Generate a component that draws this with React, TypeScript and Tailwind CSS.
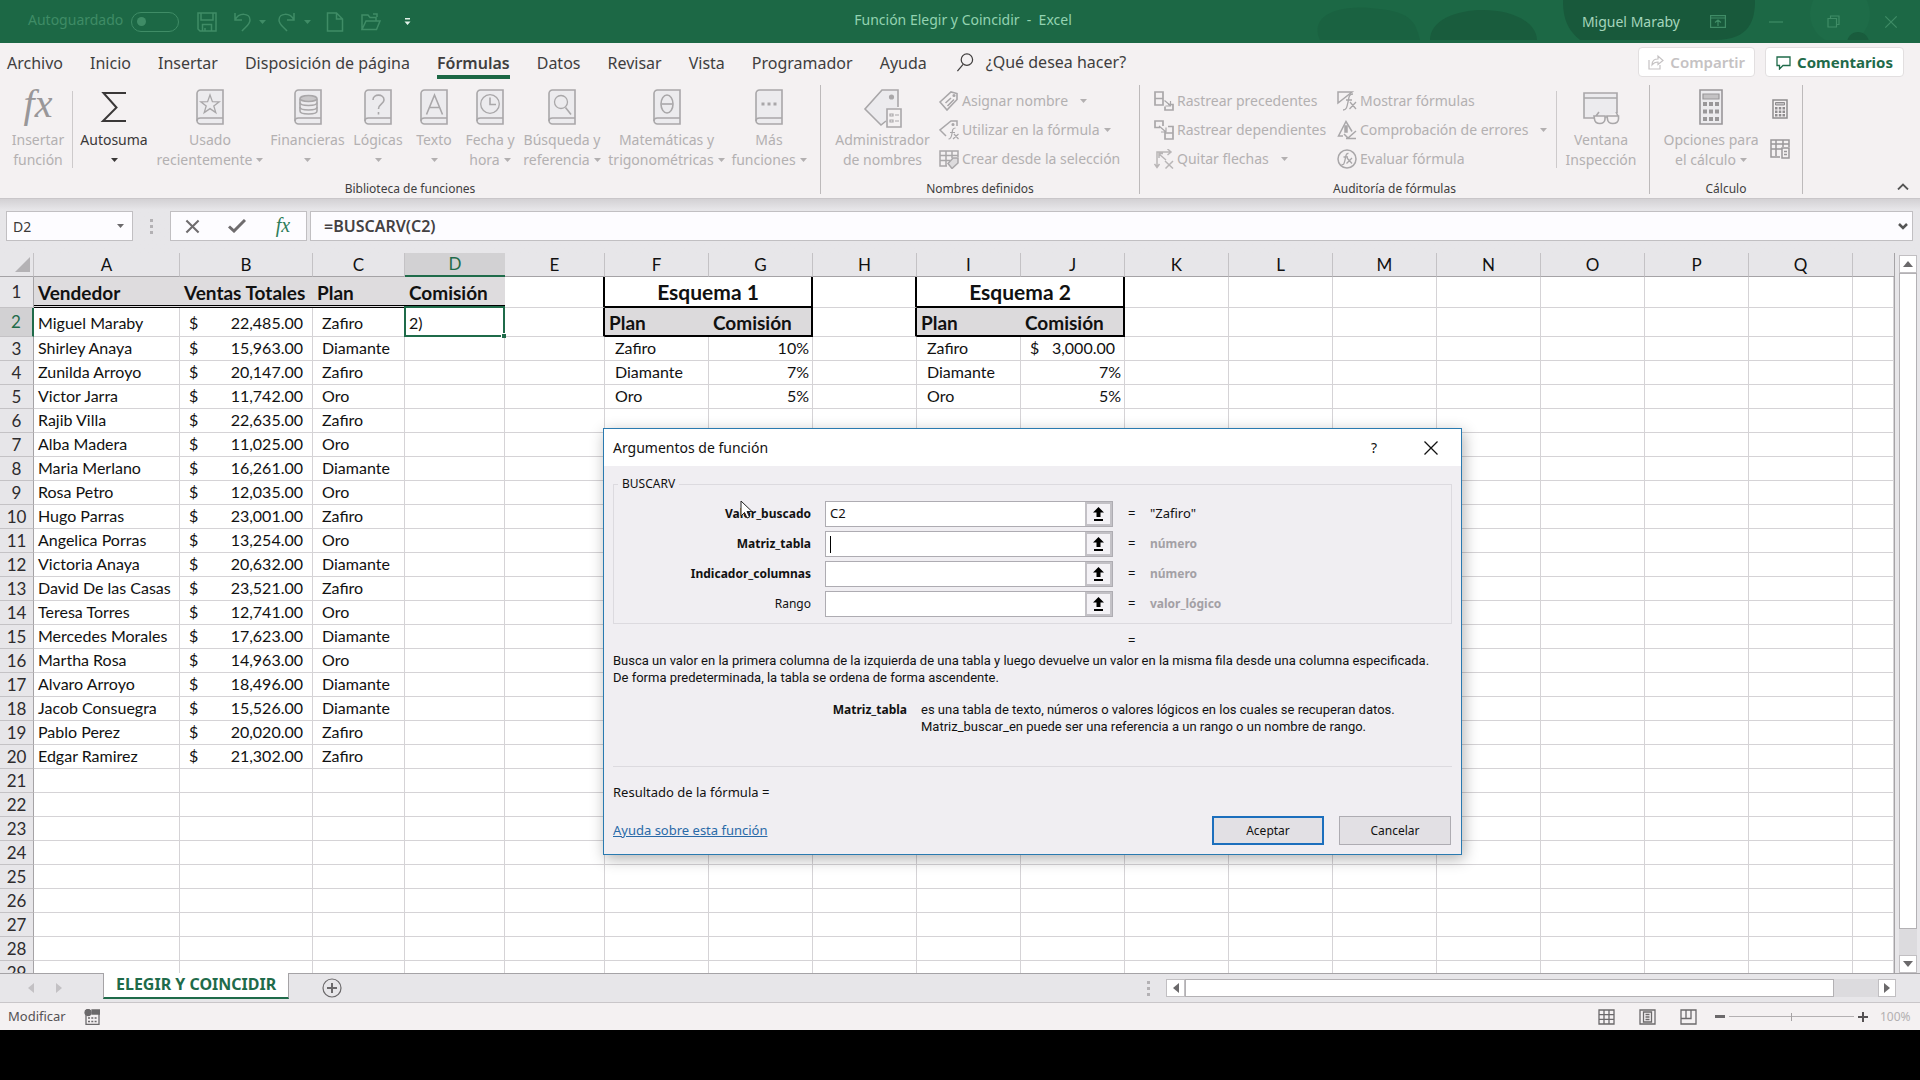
import React from 'react';

const GRAY = '#a9a7a9';

/* ---------- icons ---------- */

function Caret({ className = 'text-[#b3b0b1]' }: { className?: string }) {
  return (
    <svg viewBox="0 0 7 4" className={`h-1 w-[7px] shrink-0 ${className}`} fill="currentColor" aria-hidden="true">
      <path d="M0 0h7L3.500 4z" />
    </svg>
  );
}

function Book({ children }: { children: React.ReactNode }) {
  return (
    <svg viewBox="0 0 28 36" className="h-9 w-7" fill="none" stroke="#a9a7a9" strokeWidth="1.600" aria-hidden="true">
      <path d="M5 1h22v34H4.500a3.500 3.500 0 0 1-3.500-3.500V4.500A3.500 3.500 0 0 1 4.500 1z" fill="#ecebee" />
      <path d="M1 32c0-2 1.500-3 3.500-3H27" />
      {children}
    </svg>
  );
}

function FxGlyph({ size, color, className }: { size: number; color: string; className: string }) {
  return (
    <svg viewBox="0 0 36 36" className={`overflow-visible ${className}`} aria-hidden="true">
      <text x="18" y="28" textAnchor="middle" fontFamily='"Liberation Serif", serif' fontStyle="italic" fontSize={size} fill={color}>
        fx
      </text>
    </svg>
  );
}

const Sigma = () => (
  <svg viewBox="0 0 28 36" className="h-9 w-7" fill="none" stroke="#3a3838" strokeWidth="2" aria-hidden="true">
    <path d="M26 4H3.500l13 14.500L3 32h23" />
  </svg>
);

const StarBook = () => (
  <Book>
    <path d="M14 6l2.400 6.600 6.800.2-5.400 4.100 2 6.700-5.800-4-5.800 4 2-6.700-5.400-4.100 6.800-.2z" strokeWidth="1.300" />
  </Book>
);
const CoinBook = () => (
  <Book>
    <path d="M6 10v12c0 4 17 4 17 0V10" />
    <ellipse cx="14.500" cy="9.500" rx="8.500" ry="3" fill="#c9c7c9" />
    <path d="M6 13.500c0 4 17 4 17 0M6 18c0 4 17 4 17 0" />
  </Book>
);
const QuestionBook = () => (
  <Book>
    <path d="M9 11c0-6.500 11-6.500 11 0 0 4-5.500 4-5.500 9M14.500 23v2.500" />
  </Book>
);
const LetterBook = () => (
  <Book>
    <path d="M6.500 25.500L14.500 6l8 19.500M9.500 18.500h10" />
  </Book>
);
const ClockBook = () => (
  <Book>
    <circle cx="14" cy="15" r="9.300" strokeWidth="1.300" />
    <path d="M14 8.500V15.500h6" />
  </Book>
);
const SearchBook = () => (
  <Book>
    <circle cx="13" cy="13" r="6.500" strokeWidth="1.300" />
    <path d="M17.500 18.500l5.500 7" />
  </Book>
);
const ThetaBook = () => (
  <Book>
    <ellipse cx="14" cy="15" rx="6" ry="9" />
    <path d="M8.500 15h11" />
  </Book>
);
const DotsBook = () => (
  <Book>
    <path d="M6.500 13.500h3v3h-3zM12.500 13.500h3v3h-3zM18.500 13.500h3v3h-3z" fill={GRAY} stroke="none" />
  </Book>
);
const NameTag = () => (
  <svg viewBox="0 0 40 40" className="mb-[-4px] h-10 w-10" fill="none" stroke={GRAY} strokeWidth="1.600" aria-hidden="true">
    <path d="M23 32l-5 4L2 20 19 1h16v17" fill="#ecebee" />
    <circle cx="28.500" cy="8" r="1.800" fill={GRAY} />
    <path d="M24 20h14v18H24z" fill="#f4f1f2" />
    <path d="M27 25h3v2h-3zM27 31h3v2h-3zM32 26h4M32 32h4" strokeWidth="1.200" />
  </svg>
);
const TagSmall = () => (
  <svg viewBox="0 0 20 20" className="h-5 w-5" fill="none" stroke={GRAY} strokeWidth="1.600" aria-hidden="true">
    <path d="M1 11L12 1l6 1.500v6L8 19z" />
    <path d="M6.500 12L12 7M8.500 15L15 8.500" />
    <circle cx="15" cy="4.500" r=".8" />
  </svg>
);
const TagFx = () => (
  <svg viewBox="0 0 20 20" className="h-5 w-5" fill="none" stroke={GRAY} strokeWidth="1.500" aria-hidden="true">
    <path d="M7 16l-6-6L12 1h6v5" />
    <circle cx="14" cy="4.500" r=".8" />
    <path d="M16.500 8c-3 0-3 2-3.500 5.500S12 19 9.500 19M11 12.500h5M15 14l4.500 5M19.500 14L14 19" strokeWidth="1.200" />
  </svg>
);
const TableTag = () => (
  <svg viewBox="0 0 20 20" className="h-5 w-5" fill="none" stroke={GRAY} strokeWidth="1.500" aria-hidden="true">
    <path d="M8 17H1V2h18v6M1 6.500h18M1 11.500h10M7 2v15M13 2v7" />
    <path d="M9 14.500l5-5.500h5v5l-6 5.500z" fill="#dddbdd" />
  </svg>
);
const Precedents = () => (
  <svg viewBox="0 0 20 20" className="h-5 w-5" fill="none" stroke={GRAY} strokeWidth="1.700" aria-hidden="true">
    <path d="M1 1h8v13H1zM1 7.500h8M14 13.500h5V19h-8v-3.500" />
    <path d="M10.500 9.500l6 5M16.500 10v5h-5" strokeWidth="1.200" />
  </svg>
);
const Dependents = () => (
  <svg viewBox="0 0 20 20" className="h-5 w-5" fill="none" stroke={GRAY} strokeWidth="1.700" aria-hidden="true">
    <path d="M6 7.500H1V1h8v5M14 6.500h5V19h-8V12M11 13h8" />
    <path d="M5 6l7 6M12 7.500V12H7" strokeWidth="1.200" />
  </svg>
);
const RemoveArrows = () => (
  <svg viewBox="0 0 20 20" className="h-5 w-5" fill="none" stroke="#b9b6b7" strokeWidth="1.500" aria-hidden="true">
    <path d="M3 19V3h14M13.500 0L17 3l-3.500 3M.5 15L3 18.500 5.500 15M5 5l7 6M9 4.500H5V9M11 12l8 7.500M19 12l-7.500 7.500" />
  </svg>
);
const ShowFormulas = () => (
  <svg viewBox="0 0 20 20" className="h-5 w-5" fill="none" stroke={GRAY} strokeWidth="1.500" aria-hidden="true">
    <path d="M1 12V1h14L1 12z" />
    <path d="M16 3c-4 0-4 3-5 8S9.500 19 6 19M9 9h6M13 11l6 7M19 11l-6.500 7" strokeWidth="1.300" />
  </svg>
);
const ErrorCheck = () => (
  <svg viewBox="0 0 20 20" className="h-5 w-5" fill="none" stroke={GRAY} strokeWidth="1.500" aria-hidden="true">
    <path d="M6 16H1.500L9 1.500l6 10" />
    <path d="M8 6h2v6H8z" fill={GRAY} />
    <path d="M7 14l4 4 8-7M9 18.500h10" />
  </svg>
);
const Evaluate = () => (
  <svg viewBox="0 0 20 20" className="h-5 w-5" fill="none" stroke={GRAY} strokeWidth="1.500" aria-hidden="true">
    <circle cx="10" cy="10" r="9" />
    <path d="M11.500 4.500C8.500 4 9 7 8 11s-1 5-3.500 4.500M6.500 8h4.500M10 9l5 5.500M15 9l-5.500 5.500" strokeWidth="1.300" />
  </svg>
);
const WatchWindow = () => (
  <svg viewBox="0 0 38 36" className="h-9 w-[38px]" fill="none" stroke={GRAY} strokeWidth="1.600" aria-hidden="true">
    <path d="M12 29H2V4h33v20" fill="#ecebee" />
    <path d="M2 9h33" />
    <path d="M12 27h11v3c0 6-10 6-10.500 0zM25 27h11.500v3c-.5 6-11 6-11 0zM23 28h2.500M14 27l3-4M36 27l-2-4" fill="#f4f1f2" />
  </svg>
);
const Calculator = ({ className }: { className: string }) => (
  <svg viewBox="0 0 24 36" className={className} fill="none" stroke="#999799" strokeWidth="1.600" aria-hidden="true">
    <path d="M1 1h22v34H1z" fill="#ecebee" />
    <path d="M4 5h16v5H4z" fill="#c4c2c4" strokeWidth="1.200" />
    <path d="M4 13h4v4H4zM10 13h4v4h-4zM16 13h4v4h-4zM4 20.500h4v4H4zM10 20.500h4v4h-4zM16 20.500h4v4h-4zM4 28h4v4H4zM10 28h4v4h-4zM16 28h4v4h-4z" fill="#999799" stroke="none" />
  </svg>
);
const SmallCalculator = () => (
  <svg viewBox="0 0 16 20" className="h-5 w-4" fill="none" stroke="#8f8d8f" strokeWidth="1.500" aria-hidden="true">
    <path d="M1 1h14v18H1z" />
    <path d="M3.500 3.500h9v2.500h-9z" fill="#c4c2c4" strokeWidth="1" />
    <path d="M3 8h2.500v2.500H3zM6.800 8h2.500v2.500H6.800zM10.500 8H13v2.500h-2.500zM3 11.500h2.500V14H3zM6.800 11.500h2.500V14H6.800zM10.500 11.500H13V14h-2.500zM3 15h2.500v2.500H3zM6.800 15h2.500v2.500H6.800zM10.500 15H13v2.500h-2.500z" fill="#8f8d8f" stroke="none" />
  </svg>
);
const CalcSheet = () => (
  <svg viewBox="0 0 20 20" className="h-5 w-5" fill="none" stroke="#999799" strokeWidth="1.500" aria-hidden="true">
    <path d="M10 18H1V1h18v7M1 5h18M1 10h11M6 1v16M13 1v7" />
    <path d="M12 9h7v10h-7zM14 12.500h3M14 15.500h3" />
  </svg>
);
const Cross = ({ className, width }: { className: string; width: number }) => (
  <svg viewBox="0 0 16 16" className={className} fill="none" stroke="currentColor" strokeWidth={width} aria-hidden="true">
    <path d="M1.500 1.500l13 13M14.500 1.500l-13 13" />
  </svg>
);

/* ---------- title bar and ribbon tabs ---------- */

function TitleBar() {
  const stroke = { fill: 'none', stroke: 'currentColor', strokeWidth: 1.5 };
  return (
    <header className="relative flex h-[43px] shrink-0 items-center bg-[#1c6845] text-[14px] text-[#3f8c66]">
      <svg viewBox="0 0 640 43" className="absolute right-0 top-0 h-full w-[640px]" aria-hidden="true">
        <path d="M40 40C30 20 50 5 90 8s45 12 50 32z" fill="#1a6241" />
        <path d="M150 40c0-40 105-40 107 0z" fill="#195c3d" />
        <path d="M283 0h192c0 20-5 40-40 40H300c-15-12-17-26-17-40z" fill="#18593b" />
        <circle cx="560" cy="14" r="30" fill="#1e6c48" />
        <circle cx="578" cy="43" r="11" fill="#195c3d" />
        <path d="M0 40h640v3H0z" fill="#1c6845" />
      </svg>
      <div className="relative flex min-w-0 flex-1 items-center pl-7">
        <span className="pb-1">Autoguardado</span>
        <button role="switch" aria-checked="false" aria-label="Autoguardado" className="ml-2 flex h-5 w-12 items-center rounded-full border border-current pl-[5px]">
          <span className="h-[9px] w-[9px] rounded-full bg-current" />
        </button>
        <button aria-label="Guardar" className="ml-[18px]">
          <svg viewBox="0 0 20 20" className="h-5 w-5" {...stroke}>
            <path d="M1 1h18v18H3l-2-2zM4 1v7h12V1M5.500 19v-6.500h9V19M8 16v3" />
          </svg>
        </button>
        <button aria-label="Deshacer" className="ml-4 flex items-center gap-2">
          <svg viewBox="0 0 18 20" className="h-5 w-[18px]" {...stroke}>
            <path d="M2 1v7h7M2 8C6 0 17 1 17 8c0 5-5 7-8 11" />
          </svg>
          <Caret className="text-current" />
        </button>
        <button aria-label="Rehacer" className="ml-3 flex items-center gap-2">
          <svg viewBox="0 0 18 20" className="h-5 w-[18px]" {...stroke}>
            <path d="M16 1v7H9M16 8C12 0 1 1 1 8c0 5 5 7 8 11" />
          </svg>
          <Caret className="text-current" />
        </button>
        <button aria-label="Nuevo" className="ml-[15px]">
          <svg viewBox="0 0 18 20" className="h-5 w-[18px]" {...stroke}>
            <path d="M1.500 1h9l6 6v12h-15zM10.500 1v6h6" />
          </svg>
        </button>
        <button aria-label="Abrir" className="ml-[17px]">
          <svg viewBox="0 0 20 18" className="h-[18px] w-5" {...stroke}>
            <path d="M1 16.500V2h6l2 2.500h6V8M1 16.500L5 8h14l-3.500 8.500zM12 1h4v3" />
          </svg>
        </button>
        <button aria-label="Personalizar barra" className="ml-[23px] text-[#e3f3ea]">
          <svg viewBox="0 0 7 8" className="h-2 w-[7px]" fill="currentColor">
            <path d="M1 0h5v1.500H1zM.500 3.500h6L3.500 7z" />
          </svg>
        </button>
      </div>
      <h1 className="relative whitespace-pre pb-1 text-center font-normal text-[#93d3b1]">Función Elegir y Coincidir  -  Excel</h1>
      <div className="relative flex min-w-0 flex-1 items-center justify-end pr-[22px]">
        <span className="mr-[30px] text-[#a5d5bb]">Miguel Maraby</span>
        <button aria-label="Opciones de cinta" className="mr-[43px]">
          <svg viewBox="0 0 16 13" className="h-[13px] w-4" {...stroke} strokeWidth="1.200">
            <path d="M.6.6h14.800v11.800H.6zM.6 3h14.800M8 11V5M5 7.500L8 5l3 2.500" />
          </svg>
        </button>
        <button aria-label="Minimizar" className="mr-11">
          <svg viewBox="0 0 14 14" className="h-[14px] w-[14px]" {...stroke} strokeWidth="1.200"><path d="M0 7h14" /></svg>
        </button>
        <button aria-label="Restaurar" className="mr-11">
          <svg viewBox="0 0 13 13" className="h-[13px] w-[13px]" {...stroke} strokeWidth="1.200"><path d="M1 3.500h8.500V12H1zM3.500 3V1H12v8.500h-2" /></svg>
        </button>
        <button aria-label="Cerrar"><Cross className="h-[14px] w-[14px]" width={1.4} /></button>
      </div>
    </header>
  );
}

const TABS = ['Archivo', 'Inicio', 'Insertar', 'Disposición de página', 'Fórmulas', 'Datos', 'Revisar', 'Vista', 'Programador', 'Ayuda'];

function TabRow() {
  return (
    <nav className="flex h-[42px] shrink-0 items-start justify-between pl-[7px] pr-4 text-[16px] text-[#403e3e]">
      <div className="flex items-start gap-[27px] pt-[7px]">
        {TABS.map((t) => (
          <button
            key={t}
            className={
              t === 'Fórmulas'
                ? 'h-[29px] whitespace-nowrap border-b-4 border-[#1c6845] font-semibold leading-6'
                : 'h-[29px] whitespace-nowrap border-b-4 border-transparent leading-6'
            }
          >
            {t}
          </button>
        ))}
        <button className="flex h-6 items-center gap-3 whitespace-nowrap pl-[2px]">
          <svg viewBox="0 0 18 20" className="h-[19px] w-[18px]" fill="none" stroke="currentColor" strokeWidth="1.300" aria-hidden="true">
            <circle cx="11" cy="7" r="6" />
            <path d="M7 12l-6 7" />
          </svg>
          ¿Qué desea hacer?
        </button>
      </div>
      <div className="flex gap-[10px] pt-1">
        <button disabled className="flex h-[30px] items-center gap-1.5 rounded border border-[#e2dfe0] bg-white px-[9px] text-[15px] font-semibold text-[#c5c2c3]">
          <svg viewBox="0 0 16 16" className="h-4 w-4" fill="none" stroke="currentColor" strokeWidth="1.200" aria-hidden="true">
            <path d="M1 6v9h11v-4M4 11c0-5 3-6 6-6V2l5 4.500-5 4V8c-3 0-4.500 1-6 3z" />
          </svg>
          Compartir
        </button>
        <button className="flex h-[30px] items-center gap-1.5 rounded border border-[#e2dfe0] bg-white px-[10px] text-[15px] font-bold text-[#1f6b4a]">
          <svg viewBox="0 0 15 15" className="h-[15px] w-[15px]" fill="none" stroke="currentColor" strokeWidth="1.300" aria-hidden="true">
            <path d="M1 2h13v8.500H7L3.500 14v-3.500H1z" />
          </svg>
          Comentarios
        </button>
      </div>
    </nav>
  );
}

/* ---------- ribbon ---------- */

type BigProps = { icon: React.ReactNode; lines: string[]; width: string; caret?: boolean; active?: boolean };

function BigButton({ icon, lines, width, caret, active }: BigProps) {
  return (
    <button className={`flex shrink-0 flex-col items-center pt-1 text-[14px] leading-5 ${width} ${active ? 'text-[#3a3838]' : 'text-[#b3b0b1]'}`}>
      {icon}
      <span className="mt-[5px] whitespace-nowrap">{lines[0]}</span>
      <span className="flex h-5 items-center gap-1 whitespace-nowrap">
        {lines[1]}
        {caret && <Caret className={active ? 'text-[#3a3838]' : 'text-[#b3b0b1]'} />}
      </span>
    </button>
  );
}

function SmallButton({ icon, label, caret, gap = 'ml-1' }: { icon: React.ReactNode; label: string; caret?: boolean; gap?: string }) {
  return (
    <button className="flex h-[29px] items-center whitespace-nowrap text-[14px] text-[#b3b0b1]">
      {icon}
      <span className="ml-[3px]">{label}</span>
      {caret && <span className={gap}><Caret /></span>}
    </button>
  );
}

function Group({ label, children }: { label: string; children: React.ReactNode }) {
  return (
    <section className="flex shrink-0 flex-col border-r border-[#bdbabb]">
      <div className="flex flex-1">{children}</div>
      <h2 className="text-center text-[12px] font-normal leading-[11px] text-[#403e3e]">{label}</h2>
    </section>
  );
}

const Divider = () => <span className="mt-1.5 h-[77px] w-px shrink-0 bg-[#cdcacb]" />;

function Ribbon() {
  return (
    <div className="relative flex h-[113px] shrink-0 pb-1">
      <Group label="Biblioteca de funciones">
        <div className="flex pl-1 pr-[11px]">
          <BigButton width="w-[68px]" icon={<FxGlyph size={40} color="#999799" className="h-9 w-9" />} lines={['Insertar', 'función']} />
          <Divider />
          <BigButton width="ml-0.5 w-[78px]" icon={<Sigma />} lines={['Autosuma', '']} caret active />
          <BigButton width="w-[114px]" icon={<StarBook />} lines={['Usado', 'recientemente']} caret />
          <BigButton width="w-[81px]" icon={<CoinBook />} lines={['Financieras', '']} caret />
          <BigButton width="w-[60px]" icon={<QuestionBook />} lines={['Lógicas', '']} caret />
          <BigButton width="w-[52px]" icon={<LetterBook />} lines={['Texto', '']} caret />
          <BigButton width="w-[60px]" icon={<ClockBook />} lines={['Fecha y', 'hora']} caret />
          <BigButton width="w-[84px]" icon={<SearchBook />} lines={['Búsqueda y', 'referencia']} caret />
          <BigButton width="w-[125px]" icon={<ThetaBook />} lines={['Matemáticas y', 'trigonométricas']} caret />
          <BigButton width="w-[80px]" icon={<DotsBook />} lines={['Más', 'funciones']} caret />
        </div>
      </Group>
      <Group label="Nombres definidos">
        <div className="flex pl-[5px]">
          <BigButton width="w-[113px]" icon={<NameTag />} lines={['Administrador', 'de nombres']} />
          <div className="flex w-[200px] flex-col pt-px">
            <SmallButton icon={<TagSmall />} label="Asignar nombre" caret gap="ml-3" />
            <SmallButton icon={<TagFx />} label="Utilizar en la fórmula" caret />
            <SmallButton icon={<TableTag />} label="Crear desde la selección" />
          </div>
        </div>
      </Group>
      <Group label="Auditoría de fórmulas">
        <div className="flex pl-[14px] pr-1.5">
          <div className="flex w-[183px] flex-col pt-px">
            <SmallButton icon={<Precedents />} label="Rastrear precedentes" />
            <SmallButton icon={<Dependents />} label="Rastrear dependientes" />
            <SmallButton icon={<RemoveArrows />} label="Quitar flechas" caret gap="ml-3" />
          </div>
          <div className="flex w-[219px] flex-col pt-px">
            <SmallButton icon={<ShowFormulas />} label="Mostrar fórmulas" />
            <SmallButton icon={<ErrorCheck />} label="Comprobación de errores" caret gap="ml-3" />
            <SmallButton icon={<Evaluate />} label="Evaluar fórmula" />
          </div>
          <Divider />
          <BigButton width="ml-0.5 w-[84px]" icon={<WatchWindow />} lines={['Ventana', 'Inspección']} />
        </div>
      </Group>
      <Group label="Cálculo">
        <div className="flex pl-2 pr-1.5">
          <BigButton width="w-[106px]" icon={<Calculator className="h-9 w-6" />} lines={['Opciones para', 'el cálculo']} caret />
          <div className="flex w-8 flex-col items-center gap-5 pt-[14px]">
            <button aria-label="Calcular ahora"><SmallCalculator /></button>
            <button aria-label="Calcular hoja"><CalcSheet /></button>
          </div>
        </div>
      </Group>
      <div className="flex flex-1 items-end justify-end pb-1 pr-[11px]">
        <button aria-label="Contraer la cinta" className="text-[#555]">
          <svg viewBox="0 0 12 7" className="h-[7px] w-3" fill="none" stroke="currentColor" strokeWidth="1.800"><path d="M1 6.500l5-5 5 5" /></svg>
        </button>
      </div>
    </div>
  );
}

function FormulaBar() {
  return (
    <div className="flex h-[55px] shrink-0 items-center border-t border-[#c9c6c9] bg-linear-to-b from-[#d3d1d4] to-[#e7e6e9] to-20% pl-1.5 pr-[7px] text-[14px] text-[#3a3838]">
      <div className="flex h-[30px] w-[127px] items-center border border-[#c1bfc2] bg-[#fdfcff] pr-2">
        <input aria-label="Cuadro de nombres" defaultValue="D2" className="w-full min-w-0 bg-transparent pl-1.5 outline-none" />
        <Caret className="text-[#6b696b]" />
      </div>
      <span className="mx-[17px] flex flex-col gap-[3px]">
        <i className="h-[3px] w-[3px] bg-[#b3b1b4]" />
        <i className="h-[3px] w-[3px] bg-[#b3b1b4]" />
        <i className="h-[3px] w-[3px] bg-[#b3b1b4]" />
      </span>
      <div className="flex h-[30px] w-[137px] items-center justify-between border border-[#c1bfc2] bg-[#fdfcff] pl-[14px] pr-[13px] text-[#6f6c6e]">
        <button aria-label="Cancelar"><Cross className="h-[15px] w-[15px]" width={2.2} /></button>
        <button aria-label="Introducir">
          <svg viewBox="0 0 18 14" className="h-[14px] w-[18px]" fill="none" stroke="currentColor" strokeWidth="3"><path d="M1 7.500l5 4.500L17 1" /></svg>
        </button>
        <button aria-label="Insertar función"><FxGlyph size={36} color="#2e7d5a" className="h-5 w-5" /></button>
      </div>
      <div className="ml-[3px] flex h-[30px] flex-1 items-center border border-[#c1bfc2] bg-[#fdfcff] pl-[13px] pr-1">
        <input aria-label="Barra de fórmulas" defaultValue="=BUSCARV(C2)" className="min-w-0 flex-1 bg-transparent text-[16px] font-semibold text-[#444143] outline-none" />
        <button aria-label="Expandir barra de fórmulas" className="text-[#555]">
          <svg viewBox="0 0 10 7" className="h-[7px] w-[10px]" fill="none" stroke="currentColor" strokeWidth="2.500"><path d="M1 1l4 4 4-4" /></svg>
        </button>
      </div>
    </div>
  );
}

/* ---------- worksheet ---------- */

const COLS = 'ABCDEFGHIJKLMNOPQ'.split('');
const WIDTHS = [34, 146, 133, 92, 100, 100, 104, 104, 104, 104, 104, 104, 104, 104, 104, 104, 104, 104];
const PEOPLE: [string, string, string][] = [
  ['Miguel Maraby', '22,485.00', 'Zafiro'],
  ['Shirley Anaya', '15,963.00', 'Diamante'],
  ['Zunilda Arroyo', '20,147.00', 'Zafiro'],
  ['Victor Jarra', '11,742.00', 'Oro'],
  ['Rajib Villa', '22,635.00', 'Zafiro'],
  ['Alba Madera', '11,025.00', 'Oro'],
  ['Maria Merlano', '16,261.00', 'Diamante'],
  ['Rosa Petro', '12,035.00', 'Oro'],
  ['Hugo Parras', '23,001.00', 'Zafiro'],
  ['Angelica Porras', '13,254.00', 'Oro'],
  ['Victoria Anaya', '20,632.00', 'Diamante'],
  ['David De las Casas', '23,521.00', 'Zafiro'],
  ['Teresa Torres', '12,741.00', 'Oro'],
  ['Mercedes Morales', '17,623.00', 'Diamante'],
  ['Martha Rosa', '14,963.00', 'Oro'],
  ['Alvaro Arroyo', '18,496.00', 'Diamante'],
  ['Jacob Consuegra', '15,526.00', 'Diamante'],
  ['Pablo Perez', '20,020.00', 'Zafiro'],
  ['Edgar Ramirez', '21,302.00', 'Zafiro'],
];
const PLANS: Record<number, [string, string, string]> = {
  3: ['Zafiro', '10%', '3,000.00'],
  4: ['Diamante', '7%', '7%'],
  5: ['Oro', '5%', '5%'],
};

const CELL = 'overflow-visible whitespace-nowrap border-b border-r border-[#d5d3d6] p-0 pb-0.5 text-[16px] leading-5';
const TALL = 'whitespace-nowrap border-b border-r border-[#d5d3d6] p-0 pt-0.5 text-[16px] leading-5';
const HEAD = 'whitespace-nowrap border-b-[3px] border-double border-black bg-[#dedcde] p-0 pl-1 pt-1 text-[19px] font-bold leading-6';
const TITLE = 'border-b-2 border-r-2 border-black p-0 text-center text-[21px] font-bold leading-6';
const SUBHEAD = 'border-b-2 border-black bg-[#dcdadc] p-0 pl-1 pt-0.5 text-[19px] font-bold leading-6';
const LEFT_OF_BOX = 'border-b border-r-2 border-b-[#d5d3d6] border-r-black p-0';

function Money({ value }: { value: string }) {
  return (
    <span className="flex justify-between px-[9px]">
      <span>$</span>
      <span>{value}</span>
    </span>
  );
}

function Blank({ n }: { n: number }) {
  return <>{Array.from({ length: n }, (_, i) => <td key={i} className={CELL} />)}</>;
}

function RowHead({ n }: { n: number }) {
  return (
    <th
      className={
        n === 2
          ? 'border-b border-r-2 border-b-[#c4c2c5] border-r-[#1f6b4a] bg-[#d2d1d3] p-0 text-[17px] font-normal leading-5 text-[#1f6b4a]'
          : 'border-b border-r border-b-[#c4c2c5] border-r-[#a5a3a6] bg-[#e7e6e9] p-0 text-[17px] font-normal leading-5 text-[#2e2c2e]'
      }
    >
      {n}
    </th>
  );
}

function Sheet() {
  return (
    <table className="w-full table-fixed border-separate border-spacing-0 bg-white font-['Lato',sans-serif] text-[17px] text-[#111]">
      <colgroup>
        {WIDTHS.map((w, i) => <col key={i} style={{ width: w }} />)}
        <col />
      </colgroup>
      <thead>
        <tr className="h-6 bg-[#e7e6e9]">
          <th className="border-b border-r border-b-[#a5a3a6] border-r-[#c4c2c5] p-0 pl-[15px]" aria-label="Seleccionar todo">
            <svg viewBox="0 0 15 15" className="h-[15px] w-[15px] text-[#b4b2b5]" fill="currentColor"><path d="M15 0v15H0z" /></svg>
          </th>
          {COLS.map((c) => (
            <th
              key={c}
              className={
                c === 'D'
                  ? 'border-b-2 border-[#1f6b4a] bg-[#d2d1d3] p-0 font-normal leading-5 text-[#1f6b4a]'
                  : 'border-b border-r border-b-[#a5a3a6] border-r-[#c4c2c5] p-0 font-normal leading-5'
              }
            >
              {c}
            </th>
          ))}
          <th className="border-b border-[#a5a3a6] p-0" />
        </tr>
      </thead>
      <tbody>
        <tr className="h-[31px]">
          <RowHead n={1} />
          <td className={HEAD}>Vendedor</td>
          <td className={HEAD}>Ventas Totales</td>
          <td className={HEAD}>Plan</td>
          <td className={HEAD}>Comisión</td>
          <td className={LEFT_OF_BOX} />
          <td colSpan={2} className={TITLE}>Esquema 1</td>
          <td className={LEFT_OF_BOX} />
          <td colSpan={2} className={TITLE}>Esquema 2</td>
          <Blank n={8} />
        </tr>
        <tr className="h-[29px]">
          <RowHead n={2} />
          <td className={`${TALL} pl-1`}>{PEOPLE[0][0]}</td>
          <td className={TALL}><Money value={PEOPLE[0][1]} /></td>
          <td className={`${TALL} pl-[9px]`}>{PEOPLE[0][2]}</td>
          <td className={`${TALL} relative pl-1`}>
            2)
            <span className="absolute -bottom-px -left-px -right-px -top-0.5 border-2 border-[#1f6b4a]" />
            <span className="absolute -bottom-0.5 -right-0.5 h-[5px] w-[5px] border-l border-t border-white bg-[#1f6b4a]" />
          </td>
          <td className={LEFT_OF_BOX} />
          <td className={SUBHEAD}>Plan</td>
          <td className={`${SUBHEAD} border-r-2`}>Comisión</td>
          <td className={LEFT_OF_BOX} />
          <td className={SUBHEAD}>Plan</td>
          <td className={`${SUBHEAD} border-r-2`}>Comisión</td>
          <Blank n={8} />
        </tr>
        {Array.from({ length: 27 }, (_, i) => i + 3).map((n) => {
          const p = PEOPLE[n - 2];
          const s = PLANS[n];
          return (
            <tr key={n} className="h-6">
              <RowHead n={n} />
              {p ? (
                <>
                  <td className={`${CELL} pl-1`}>{p[0]}</td>
                  <td className={CELL}><Money value={p[1]} /></td>
                  <td className={`${CELL} pl-[9px]`}>{p[2]}</td>
                </>
              ) : (
                <Blank n={3} />
              )}
              <Blank n={2} />
              {s ? (
                <>
                  <td className={`${CELL} pl-[10px]`}>{s[0]}</td>
                  <td className={`${CELL} pr-[3px] text-right`}>{s[1]}</td>
                  <td className={CELL} />
                  <td className={`${CELL} pl-[10px]`}>{s[0]}</td>
                  {n === 3 ? <td className={CELL}><Money value={s[2]} /></td> : <td className={`${CELL} pr-[3px] text-right`}>{s[2]}</td>}
                  <Blank n={8} />
                </>
              ) : (
                <Blank n={13} />
              )}
            </tr>
          );
        })}
      </tbody>
    </table>
  );
}

/* ---------- function arguments dialog ---------- */

const ARGS = [
  { name: 'Valor_buscado', value: 'C2', result: '"Zafiro"', bold: true, muted: false },
  { name: 'Matriz_tabla', value: '', result: 'número', bold: true, muted: true },
  { name: 'Indicador_columnas', value: '', result: 'número', bold: true, muted: true },
  { name: 'Rango', value: '', result: 'valor_lógico', bold: false, muted: true },
];

function Dialog() {
  return (
    <div
      role="dialog"
      aria-label="Argumentos de función"
      className="absolute left-[603px] top-[428px] flex w-[859px] flex-col border border-[#2a7ab0] bg-[#f0eef2] pb-[9px] text-[13px] text-[#111] shadow-[2px_4px_14px_rgba(0,0,0,0.3)]"
    >
      <div className="flex h-[37px] items-center bg-white pl-[9px] pr-[22px] text-[14px]">
        <h2 className="flex-1 font-normal">Argumentos de función</h2>
        <button aria-label="Ayuda" className="mr-[46px]">?</button>
        <button aria-label="Cerrar"><Cross className="h-4 w-4" width={1.3} /></button>
      </div>
      <fieldset className="mx-[9px] mt-[9px] flex flex-col gap-1 border border-[#dcdadf] pb-1.5 pt-2">
        <legend className="ml-1 h-[18px] px-1 text-[12px] leading-[18px]">BUSCARV</legend>
        {ARGS.map((a, i) => (
          <div key={a.name} className="flex h-[26px] items-center">
            <label htmlFor={a.name} className={`w-[197px] text-right text-[12px] ${a.bold ? 'font-bold' : ''}`}>
              {a.name}
            </label>
            <div className="relative ml-[14px] flex h-[26px] w-[288px] border border-[#aeacb2] bg-white">
              <input id={a.name} defaultValue={a.value} className="min-w-0 flex-1 bg-white pl-1 text-[13px] outline-none" />
              {i === 1 && <span className="absolute left-1 top-1 h-[17px] w-px bg-black" />}
              <button aria-label={`Seleccionar ${a.name}`} className="flex w-[27px] items-center justify-center border-2 border-[#c3c1c6] bg-[#f4f2f6]">
                <svg viewBox="0 0 11 14" className="h-[14px] w-[11px]" fill="#000">
                  <path d="M5.500 0L11 5.500H7.500V10h-4V5.500H0zM1 12h9v2H1z" />
                </svg>
              </button>
            </div>
            <span className="ml-[15px] w-[22px]">=</span>
            <span className={a.muted ? 'text-[12px] font-bold text-[#a3a0a5]' : ''}>{a.result}</span>
          </div>
        ))}
      </fieldset>
      <div className="h-[26px] pl-[524px] pt-1.5 leading-5">=</div>
      <p className="mt-0.5 px-[9px] font-['Roboto',sans-serif] leading-[17px]">
        Busca un valor en la primera columna de la izquierda de una tabla y luego devuelve un valor en la misma fila desde una columna especificada.
        <br />
        De forma predeterminada, la tabla se ordena de forma ascendente.
      </p>
      <div className="mt-[15px] flex gap-[14px] leading-[17px]">
        <strong className="w-[303px] text-right text-[12px]">Matriz_tabla</strong>
        <p className="font-['Roboto',sans-serif]">
          es una tabla de texto, números o valores lógicos en los cuales se recuperan datos.
          <br />
          Matriz_buscar_en puede ser una referencia a un rango o un nombre de rango.
        </p>
      </div>
      <hr className="mx-[9px] mt-[31px] border-[#dcdadf]" />
      <p className="mt-[15px] pl-[9px] leading-5">Resultado de la fórmula =</p>
      <div className="mt-[14px] flex items-center justify-between pl-[9px] pr-[10px]">
        <a href="#ayuda" className="text-[#2a6aa8] underline">Ayuda sobre esta función</a>
        <div className="flex gap-[15px] text-[12px]">
          <button className="h-[29px] w-28 border-2 border-[#1c6fbd] bg-[#e2e0e4]">Aceptar</button>
          <button className="h-[29px] w-28 border border-[#aeacb2] bg-[#e2e0e4]">Cancelar</button>
        </div>
      </div>
    </div>
  );
}

/* ---------- scroll bars, sheet tabs, status bar ---------- */

const ARROWS: Record<string, string> = { up: 'M0 8l5-6 5 6z', down: 'M0 2l5 6 5-6z', left: 'M8 0L2 5l6 5z', right: 'M2 0l6 5-6 5z' };

function Arrow({ dir }: { dir: string }) {
  return (
    <svg viewBox="0 0 10 10" className="h-[10px] w-[10px]" fill="currentColor" aria-hidden="true">
      <path d={ARROWS[dir]} />
    </svg>
  );
}

function VerticalScroll() {
  return (
    <div className="flex w-[26px] shrink-0 flex-col items-center border-l border-[#a5a3a6] bg-[#e7e6e9] pt-0.5 text-[#6b696b]">
      <button aria-label="Desplazar arriba" className="flex h-[18px] w-[18px] items-center justify-center border border-[#c1bfc2] bg-white"><Arrow dir="up" /></button>
      <div className="flex w-[18px] flex-1 flex-col bg-[#dcdbde] pb-[26px]">
        <div className="flex-1 border border-[#b3b1b4] bg-white" />
      </div>
      <button aria-label="Desplazar abajo" className="flex h-[18px] w-[18px] items-center justify-center border border-[#c1bfc2] bg-white"><Arrow dir="down" /></button>
    </div>
  );
}

function SheetTabs() {
  return (
    <div className="flex h-[29px] shrink-0 border-t border-[#a5a3a6] bg-[#e7e6e9] text-[#6b696b]">
      <div className="flex w-[103px] items-center gap-[18px] pl-[26px] text-[#c3c1c4]">
        <button aria-label="Hoja anterior"><Arrow dir="left" /></button>
        <button aria-label="Hoja siguiente"><Arrow dir="right" /></button>
      </div>
      <button className="-mt-px h-[26px] border-x border-b-2 border-x-[#a5a3a6] border-b-[#1f6b4a] bg-white px-3 pb-0.5 text-[16px] font-bold leading-[20px] text-[#1f6b4a]">ELEGIR Y COINCIDIR</button>
      <button aria-label="Hoja nueva" className="ml-[33px] self-center">
        <svg viewBox="0 0 20 20" className="h-5 w-5" fill="none" stroke="currentColor" strokeWidth="1.200">
          <circle cx="10" cy="10" r="9" />
          <path d="M10 5v10M5 10h10" strokeWidth="2" />
        </svg>
      </button>
      <div className="flex flex-1 items-center justify-end pr-6">
        <span className="mr-4 flex flex-col gap-[3px]">
          <i className="h-[3px] w-[3px] bg-[#b3b1b4]" />
          <i className="h-[3px] w-[3px] bg-[#b3b1b4]" />
          <i className="h-[3px] w-[3px] bg-[#b3b1b4]" />
        </span>
        <div className="flex h-[18px] w-[730px]">
          <button aria-label="Desplazar a la izquierda" className="flex w-[19px] items-center justify-center border border-[#c1bfc2] bg-white"><Arrow dir="left" /></button>
          <div className="flex-1 bg-[#dcdbde] pr-11"><div className="h-full border border-[#b3b1b4] bg-white" /></div>
          <button aria-label="Desplazar a la derecha" className="flex w-[18px] items-center justify-center border border-[#c1bfc2] bg-white"><Arrow dir="right" /></button>
        </div>
      </div>
    </div>
  );
}

function StatusBar() {
  const line = { fill: 'none', stroke: '#6b696b', strokeWidth: 1.3 };
  return (
    <footer className="flex h-[28px] shrink-0 items-center border-t border-[#c9c6c9] bg-[#f4f1f2] pl-2 pr-2 text-[12px] text-[#555254]">
      <span className="text-[13px]">Modificar</span>
      <button aria-label="Grabar macro" className="ml-[18px]">
        <svg viewBox="0 0 16 16" className="h-4 w-4" {...line}>
          <path d="M2 5v10.300h13V3" />
          <path d="M8 1h7.500v4H8z" fill="#6b696b" />
          <circle cx="4" cy="3.500" r="3" fill="#6b696b" />
          <path d="M4 9h9M4 12.500h9" strokeDasharray="2 1.300" />
        </svg>
      </button>
      <div className="flex flex-1 items-center justify-end">
        <button aria-label="Normal" className="mr-6">
          <svg viewBox="0 0 17 16" className="h-4 w-[17px]" {...line}><path d="M1 1h15v14H1zM6 1v14M11 1v14M1 5.700h15M1 10.300h15" /></svg>
        </button>
        <button aria-label="Diseño de página" className="mr-6">
          <svg viewBox="0 0 17 16" className="h-4 w-[17px]" {...line}><path d="M1 1h15v14H1zM4.500 3h8v10h-8zM6.500 5.500h4M6.500 8h4M6.500 10.500h4" /></svg>
        </button>
        <button aria-label="Salto de página" className="mr-[18px]">
          <svg viewBox="0 0 17 16" className="h-4 w-[17px]" {...line}><path d="M1 1h15v14H1zM1 9.500h10V1M6 1v8" /></svg>
        </button>
        <button aria-label="Alejar" className="mr-1"><span className="block h-[3px] w-[10px] bg-[#6b696b]" /></button>
        <input
          type="range"
          aria-label="Zoom"
          defaultValue={50}
          className="h-px w-[125px] appearance-none bg-[#b3b0b2] [&::-webkit-slider-thumb]:h-2 [&::-webkit-slider-thumb]:w-px [&::-webkit-slider-thumb]:appearance-none [&::-webkit-slider-thumb]:bg-[#a5a2a4]"
        />
        <button aria-label="Acercar" className="ml-1">
          <svg viewBox="0 0 10 10" className="h-[10px] w-[10px]" fill="none" stroke="#555254" strokeWidth="2"><path d="M5 0v10M0 5h10" /></svg>
        </button>
        <span className="ml-3 w-8 text-[#b3b0b1]">100%</span>
      </div>
    </footer>
  );
}

export default function App() {
  return (
    <div className="relative flex h-screen flex-col overflow-hidden bg-black font-['Noto_Sans',sans-serif]">
      <TitleBar />
      <div className="shrink-0 bg-[#f4f1f2]">
        <TabRow />
        <Ribbon />
      </div>
      <FormulaBar />
      <main className="flex min-h-0 flex-1 bg-[#e7e6e9]">
        <div className="min-w-0 flex-1 overflow-hidden">
          <Sheet />
        </div>
        <VerticalScroll />
      </main>
      <SheetTabs />
      <StatusBar />
      <div className="h-[50px] shrink-0 bg-black" />
      <Dialog />
      <svg viewBox="0 0 13 20" className="absolute left-[740px] top-[500px] h-5 w-[13px]" aria-hidden="true">
        <path d="M1 1v15l3.500-3.500L7 18l2.500-1-2.500-5.500h5z" fill="#fff" stroke="#222" />
      </svg>
    </div>
  );
}
